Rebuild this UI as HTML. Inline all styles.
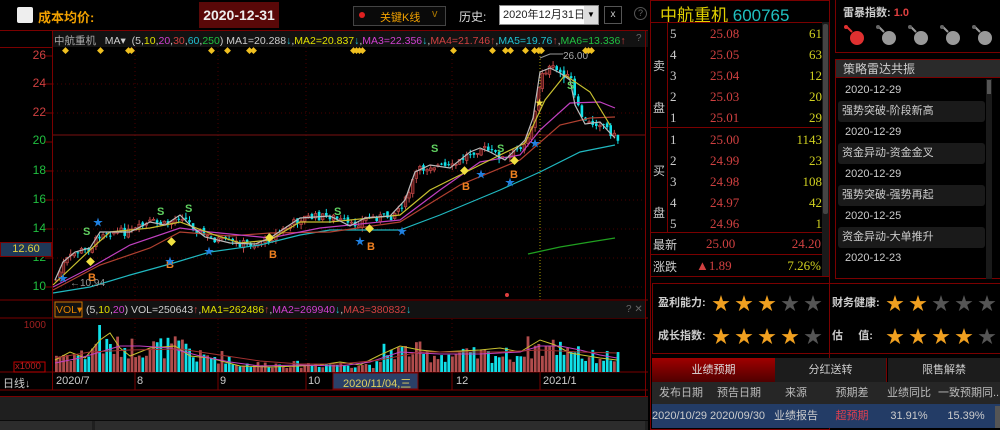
<!DOCTYPE html>
<html><head><meta charset="utf-8">
<style>
*{margin:0;padding:0;box-sizing:border-box}
body{width:1000px;height:430px;background:#000;overflow:hidden;position:relative;font-family:"Liberation Sans","Noto Sans CJK SC",sans-serif;font-size:12px;color:#ccc}
.a{position:absolute;white-space:nowrap}
.rb{border:1px solid #7a0000}
</style></head><body>
<!-- top bar -->
<div class="a" style="left:17px;top:7px;width:16px;height:16px;background:#eee;border-radius:2px"></div>
<div class="a" style="left:38px;top:7px;color:#f0a000;font-size:13px;font-weight:bold">成本均价:</div>
<div class="a" style="left:199px;top:2px;width:80px;height:26px;background:#5a0808;color:#eee;font-weight:bold;font-size:14px;line-height:26px;text-align:center">2020-12-31</div>
<div class="a" style="left:353px;top:6px;width:93px;height:20px;border:1px solid #444;background:#0a0a0a"></div>
<div class="a" style="left:359px;top:12px;width:6px;height:6px;border-radius:50%;background:#e02020"></div>
<div class="a" style="left:380px;top:9px;color:#f0a000;font-size:11px">关键K线</div>
<div class="a" style="left:432px;top:8px;color:#aa7700;font-size:11px">v</div>
<div class="a" style="left:459px;top:8px;color:#ddd;font-size:12px">历史:</div>
<div class="a" style="left:499px;top:5px;width:100px;height:20px;background:#fff;border:1px solid #888;color:#222;font-size:11px;line-height:18px;padding-left:3px">2020年12月31日</div>
<div class="a" style="left:584px;top:6px;width:14px;height:18px;background:#ddd;color:#000;font-size:8px;text-align:center;line-height:18px">▼</div>
<div class="a" style="left:604px;top:6px;width:18px;height:18px;border:1px solid #555;color:#ccc;font-size:10px;text-align:center;line-height:16px">x</div>
<div class="a" style="left:634px;top:7px;width:13px;height:13px;border:1px solid #555;border-radius:50%;color:#666;font-size:9px;text-align:center;line-height:11px">?</div>

<!-- chart frame -->
<div class="a" style="left:0;top:30px;width:648px;height:1px;background:#7a0000"></div>
<div class="a" style="left:52px;top:30px;width:1px;height:360px;background:#7a0000"></div>
<div class="a" style="left:0;top:47px;width:52px;height:1px;background:#7a0000"></div>
<div class="a" style="left:53px;top:31px;width:595px;height:16px;background:#121212"></div>
<div class="a" style="left:54px;top:33px;font-size:10.5px;color:#ccc"><span style="color:#aaa">中航重机</span>&nbsp;&nbsp;&nbsp;MA▾&nbsp;&nbsp;(5,<span style="color:#e0e000">10</span>,<span style="color:#d040d0">20</span>,<span style="color:#d04040">30</span>,<span style="color:#20c0d0">60</span>,<span style="color:#20c040">250</span>) MA1=20.288<span style="color:#20c0d0">↓</span>,<span style="color:#e0e000">MA2=20.837</span><span style="color:#20c0d0">↓</span>,<span style="color:#d040d0">MA3=22.356</span><span style="color:#20c0d0">↓</span>,<span style="color:#d04040">MA4=21.746↑</span>,<span style="color:#20c0d0">MA5=19.76</span><span style="color:#d04040">↑</span>,<span style="color:#20c040">MA6=13.336</span><span style="color:#d04040">↑</span></div>
<div class="a" style="left:636px;top:33px;font-size:10px;color:#666">?</div>
<div class="a" style="left:645px;top:30px;width:1px;height:400px;background:#7a0000"></div>

<!-- price labels -->
<div class="a" style="left:0;top:48px;width:46px;text-align:right;font-size:12px;color:#d04040">26</div>
<div class="a" style="left:0;top:76px;width:46px;text-align:right;font-size:12px;color:#d04040">24</div>
<div class="a" style="left:0;top:105px;width:46px;text-align:right;font-size:12px;color:#d04040">22</div>
<div class="a" style="left:0;top:133px;width:46px;text-align:right;font-size:12px;color:#20c040">20</div>
<div class="a" style="left:0;top:163px;width:46px;text-align:right;font-size:12px;color:#20c040">18</div>
<div class="a" style="left:0;top:192px;width:46px;text-align:right;font-size:12px;color:#20c040">16</div>
<div class="a" style="left:0;top:221px;width:46px;text-align:right;font-size:12px;color:#20c040">14</div>
<div class="a" style="left:0;top:250px;width:46px;text-align:right;font-size:12px;color:#20c040">12</div>
<div class="a" style="left:0;top:279px;width:46px;text-align:right;font-size:12px;color:#20c040">10</div>
<div class="a" style="left:0;top:242px;width:52px;height:15px;background:#1f3858;border:1px solid #7a0000;color:#e0d040;font-size:11px;text-align:center;line-height:13px">12.60</div>

<svg class="a" style="left:0;top:0" width="648" height="392" id="chart">
<g stroke="#4a0000" stroke-dasharray="1,3">
<line x1="53" y1="84" x2="645" y2="84"/><line x1="53" y1="113" x2="645" y2="113"/><line x1="53" y1="171" x2="645" y2="171"/><line x1="53" y1="200" x2="645" y2="200"/><line x1="53" y1="229" x2="645" y2="229"/><line x1="53" y1="258" x2="645" y2="258"/><line x1="53" y1="287" x2="645" y2="287"/>
<line x1="135" y1="47" x2="135" y2="372"/><line x1="218" y1="47" x2="218" y2="372"/><line x1="306" y1="47" x2="306" y2="372"/><line x1="452" y1="47" x2="452" y2="372"/>
</g>
<g stroke="#7a0000"><line x1="45" y1="56" x2="52" y2="56"/><line x1="45" y1="84" x2="52" y2="84"/><line x1="45" y1="113" x2="52" y2="113"/><line x1="45" y1="142" x2="52" y2="142"/><line x1="45" y1="171" x2="52" y2="171"/><line x1="45" y1="200" x2="52" y2="200"/><line x1="45" y1="229" x2="52" y2="229"/><line x1="45" y1="258" x2="52" y2="258"/><line x1="45" y1="287" x2="52" y2="287"/></g>
<line x1="53" y1="135" x2="645" y2="135" stroke="#7a1010"/>
<line x1="540" y1="47" x2="540" y2="300" stroke="#b0a000" stroke-dasharray="1,2"/>
<line x1="0" y1="300" x2="648" y2="300" stroke="#7a0000"/>
<line x1="0" y1="318" x2="648" y2="318" stroke="#7a0000"/>
<line x1="0" y1="372" x2="648" y2="372" stroke="#7a0000"/>
<line x1="0" y1="390" x2="648" y2="390" stroke="#7a0000"/>
<rect x="53" y="301" width="592" height="17" fill="#121212"/>
<g id="candles"></g>
<g fill="none" stroke-width="1.2">
<polyline stroke="#20b8c0" points="53,293 90,287 130,275 170,264 210,252 260,245 300,235 330,230 400,230 440,215 500,190 540,172 580,152 615,145"/>
<polyline stroke="#b04030" points="53,290 100,265 150,248 180,232 230,236 270,233 330,232 400,222 460,185 520,160 560,125 590,118 615,117"/>
<polyline stroke="#c040c0" points="53,287 90,268 130,245 180,228 210,232 270,238 320,228 400,220 440,190 480,162 520,155 540,130 570,103 600,102 615,108"/>
<polyline stroke="#c8c030" points="53,285 90,250 110,232 150,228 180,222 215,235 240,243 270,240 300,222 330,222 400,215 430,190 460,175 500,155 525,143 545,100 565,75 590,92 610,125"/>
<polyline stroke="#bbb" points="55,280 63,262 75,252 90,248 100,232 110,232 130,232 150,222 165,225 180,215 190,225 205,237 230,243 255,244 270,238 300,218 330,216 350,226 365,218 390,216 405,200 415,172 430,165 450,168 470,152 480,148 490,152 505,160 515,150 525,140 533,118 540,72 550,68 560,73 570,80 575,105 585,124 600,122 610,133 615,138"/>
<polyline stroke="#20a020" points="528,254 560,247 590,242 615,238"/>
</g>
<g font-weight="bold" font-size="11" font-family="Liberation Sans">
<g fill="#60d060"><text x="83" y="235">S</text><text x="157" y="215">S</text><text x="185" y="212">S</text><text x="334" y="215">S</text><text x="431" y="152">S</text><text x="497" y="152">S</text><text x="567" y="89">S</text></g>
<g fill="#f08020"><text x="166" y="268">B</text><text x="269" y="258">B</text><text x="367" y="250">B</text><text x="462" y="190">B</text><text x="510" y="178">B</text><text x="88" y="281">B</text></g>
</g>
<g fill="#2080e0" font-size="10"><text x="58" y="282">★</text><text x="93" y="226">★</text><text x="165" y="265">★</text><text x="204" y="255">★</text><text x="355" y="245">★</text><text x="397" y="235">★</text><text x="476" y="178">★</text><text x="505" y="186">★</text><text x="530" y="147">★</text></g>
<g fill="#f0e040" font-size="9"><text x="86" y="265">◆</text><text x="167" y="245">◆</text><text x="265" y="241">◆</text><text x="365" y="232">◆</text><text x="460" y="174">◆</text><text x="510" y="164">◆</text><text x="535" y="106">★</text></g>
<text x="70" y="286" fill="#999" font-size="10">←10.94</text>
<text x="563" y="59" fill="#aaa" font-size="10">26.00</text>
<polyline points="540,58 550,54 563,54" fill="none" stroke="#999"/>
<circle cx="507" cy="295" r="2" fill="#e04040"/>
<g fill="#f0c020" font-size="7" id="dia"></g>
<g id="vol"></g>
<g fill="none" stroke-width="1">
<polyline stroke="#c8c030" points="55,360 70,352 85,358 100,340 110,333 120,348 130,356 150,348 175,346 190,356 210,358 240,366 270,367 300,366 320,365 340,362 360,365 380,355 400,346 420,350 440,352 480,350 500,348 520,352 540,340 555,345 570,353 600,358 617,360"/>
<polyline stroke="#c040c0" points="55,363 80,358 100,352 120,346 140,346 170,348 200,356 230,362 260,366 300,365 340,366 370,362 400,352 440,354 480,354 520,352 540,346 560,346 580,350 600,355 617,358"/>
<polyline stroke="#a03030" points="55,358 90,352 130,350 180,349 220,355 260,361 300,364 340,364 380,360 420,352 460,352 500,352 540,350 580,352 617,353"/>
</g>
<rect x="55" y="302" width="27" height="15" fill="none" stroke="#d07000"/>
<rect x="14" y="362" width="31" height="10" fill="none" stroke="#c00000"/>
<rect x="333" y="373" width="85" height="16" fill="#2a4068" stroke="#7a0000"/>
<g stroke="#7a0000"><line x1="135" y1="372" x2="135" y2="390"/><line x1="218" y1="372" x2="218" y2="390"/><line x1="306" y1="372" x2="306" y2="390"/><line x1="452" y1="372" x2="452" y2="390"/><line x1="540" y1="372" x2="540" y2="390"/></g>
</svg>
<div class="a" style="left:56px;top:304px;font-size:10.5px;color:#e08000">VOL▾</div>
<div class="a" style="left:86px;top:304px;font-size:10.5px;color:#ccc">(5,<span style="color:#e0e000">10</span>,<span style="color:#d040d0">20</span>) VOL=250643<span style="color:#d04040">↑</span>,<span style="color:#e0e000">MA1=262486</span><span style="color:#d04040">↑</span>,<span style="color:#d040d0">MA2=269940</span><span style="color:#20c0d0">↓</span>,<span style="color:#d04040">MA3=380832</span><span style="color:#20c0d0">↓</span></div>
<div class="a" style="left:626px;top:304px;font-size:10px;color:#666">? ✕</div>
<div class="a" style="left:0;top:320px;width:46px;text-align:right;font-size:10px;color:#a02020">1000</div>
<div class="a" style="left:15px;top:361px;font-size:9.5px;color:#c02020">x1000</div>
<div class="a" style="left:3px;top:375px;font-size:11px;color:#ccc">日线↓</div>
<div class="a" style="left:56px;top:375px;font-size:11px;color:#ccc">2020/7</div>
<div class="a" style="left:137px;top:375px;font-size:11px;color:#ccc">8</div>
<div class="a" style="left:220px;top:375px;font-size:11px;color:#ccc">9</div>
<div class="a" style="left:308px;top:375px;font-size:11px;color:#ccc">10</div>
<div class="a" style="left:343px;top:375px;font-size:11px;color:#e0d060">2020/11/04,三</div>
<div class="a" style="left:456px;top:375px;font-size:11px;color:#ccc">12</div>
<div class="a" style="left:543px;top:375px;font-size:11px;color:#ccc">2021/1</div>
<!-- bottom left -->
<div class="a" style="left:0;top:396px;width:648px;height:34px;background:#1f1f1f;border-top:1px solid #7a0000"></div>
<div class="a" style="left:0;top:420px;width:648px;height:1px;background:#0a0a0a"></div>
<div class="a" style="left:0;top:421px;width:92px;height:9px;background:#2c2c2c"></div>
<div class="a" style="left:95px;top:421px;width:550px;height:9px;background:#2c2c2c"></div>

<!-- order book -->
<div class="a rb" style="left:650px;top:0;width:180px;height:430px"></div>
<div class="a" style="left:660px;top:1px;font-size:17px;color:#e0d000">中航重机 <span style="color:#20c0c0">600765</span></div>
<div class="a" style="left:650px;top:22px;width:180px;height:1px;background:#7a0000"></div>
<div class="a" style="left:650px;top:127px;width:172px;height:1px;background:#7a0000"></div>
<div class="a" style="left:650px;top:232px;width:172px;height:1px;background:#7a0000"></div>
<div class="a" style="left:650px;top:254px;width:172px;height:1px;background:#7a0000"></div>
<div class="a" style="left:650px;top:276px;width:180px;height:1px;background:#7a0000"></div>
<div class="a" style="left:667px;top:22px;width:1px;height:210px;background:#7a0000"></div>
<div class="a" style="left:822px;top:22px;width:7px;height:254px;background:#1a1a1a"></div>
<div class="a" style="left:823px;top:24px;width:5px;height:190px;background:#444;border-radius:2px"></div>
<div class="a" style="left:653px;top:45px;font-size:12px;color:#ccc;line-height:42px">卖<br>盘</div>
<div class="a" style="left:653px;top:150px;font-size:12px;color:#ccc;line-height:42px">买<br>盘</div>
<div class="a" style="left:670px;top:23px;width:152px;font-size:13px;line-height:21px;font-family:'Liberation Serif',serif">
<div style="display:flex"><span style="width:40px;color:#ccc">5</span><span style="width:60px;color:#d04040">25.08</span><span style="flex:1;text-align:right;color:#d0d020">61</span></div>
<div style="display:flex"><span style="width:40px;color:#ccc">4</span><span style="width:60px;color:#d04040">25.05</span><span style="flex:1;text-align:right;color:#d0d020">63</span></div>
<div style="display:flex"><span style="width:40px;color:#ccc">3</span><span style="width:60px;color:#d04040">25.04</span><span style="flex:1;text-align:right;color:#d0d020">12</span></div>
<div style="display:flex"><span style="width:40px;color:#ccc">2</span><span style="width:60px;color:#d04040">25.03</span><span style="flex:1;text-align:right;color:#d0d020">20</span></div>
<div style="display:flex"><span style="width:40px;color:#ccc">1</span><span style="width:60px;color:#d04040">25.01</span><span style="flex:1;text-align:right;color:#d0d020">29</span></div>
<div style="display:flex;margin-top:1px"><span style="width:40px;color:#ccc">1</span><span style="width:60px;color:#d04040">25.00</span><span style="flex:1;text-align:right;color:#d0d020">1143</span></div>
<div style="display:flex"><span style="width:40px;color:#ccc">2</span><span style="width:60px;color:#d04040">24.99</span><span style="flex:1;text-align:right;color:#d0d020">23</span></div>
<div style="display:flex"><span style="width:40px;color:#ccc">3</span><span style="width:60px;color:#d04040">24.98</span><span style="flex:1;text-align:right;color:#d0d020">108</span></div>
<div style="display:flex"><span style="width:40px;color:#ccc">4</span><span style="width:60px;color:#d04040">24.97</span><span style="flex:1;text-align:right;color:#d0d020">42</span></div>
<div style="display:flex"><span style="width:40px;color:#ccc">5</span><span style="width:60px;color:#d04040">24.96</span><span style="flex:1;text-align:right;color:#d0d020">1</span></div>
</div>
<div class="a" style="left:653px;top:236px;width:168px;display:flex;font-size:12px"><span style="width:30px;color:#ccc">最新</span><span style="width:70px;padding-left:23px;color:#d04040;font-family:'Liberation Serif',serif;font-size:13px">25.00</span><span style="flex:1;text-align:right;color:#d04040;font-family:'Liberation Serif',serif;font-size:13px">24.20</span></div>
<div class="a" style="left:653px;top:258px;width:168px;display:flex;font-size:12px"><span style="width:30px;color:#ccc">涨跌</span><span style="width:70px;padding-left:13px;color:#d04040;font-family:'Liberation Serif',serif;font-size:13px">▲1.89</span><span style="flex:1;text-align:right;color:#d0d020;font-family:'Liberation Serif',serif;font-size:13px">7.26%</span></div>

<!-- right column -->
<div class="a rb" style="left:835px;top:-1px;width:166px;height:54px"></div>
<div class="a" style="left:843px;top:4px;font-size:11px;color:#ccc;font-weight:bold">雷暴指数: <span style="color:#e04040">1.0</span></div>
<svg class="a" style="left:843px;top:24px" width="157" height="24">
<g><circle cx="14" cy="14" r="7" fill="#e03030"/><path d="M9,8 L4,3" stroke="#e03030" stroke-width="2"/><circle cx="3" cy="3" r="2" fill="#e03030"/></g>
<g fill="#999" stroke="#999"><circle cx="46" cy="14" r="7" stroke="none"/><path d="M41,8 L36,3" stroke-width="2"/><circle cx="35" cy="3" r="2" stroke="none" fill="#666"/>
<circle cx="78" cy="14" r="7" stroke="none"/><path d="M73,8 L68,3" stroke-width="2"/><circle cx="67" cy="3" r="2" stroke="none" fill="#666"/>
<circle cx="110" cy="14" r="7" stroke="none"/><path d="M105,8 L100,3" stroke-width="2"/><circle cx="99" cy="3" r="2" stroke="none" fill="#666"/>
<circle cx="142" cy="14" r="7" stroke="none"/><path d="M137,8 L132,3" stroke-width="2"/><circle cx="131" cy="3" r="2" stroke="none" fill="#666"/></g>
</svg>
<div class="a rb" style="left:835px;top:59px;width:166px;height:220px"></div>
<div class="a" style="left:836px;top:60px;width:164px;height:18px;background:#2a2a2a;border-bottom:1px solid #7a0000;font-size:12px;color:#ccc;padding-left:7px;line-height:18px">策略雷达共振</div>
<div class="a" style="left:986px;top:79px;width:6px;height:200px;background:#1a1a1a"></div>
<div class="a" style="left:987px;top:80px;width:4px;height:14px;background:#555"></div>
<div class="a" style="left:838px;top:80px;width:147px;font-size:11px;color:#ccc;line-height:21px">
<div style="padding-left:7px">2020-12-29</div>
<div style="background:#1a1a1a;border-radius:3px;padding-left:4px">强势突破-阶段新高</div>
<div style="padding-left:7px">2020-12-29</div>
<div style="background:#1a1a1a;border-radius:3px;padding-left:4px">资金异动-资金金叉</div>
<div style="padding-left:7px">2020-12-29</div>
<div style="background:#1a1a1a;border-radius:3px;padding-left:4px">强势突破-强势再起</div>
<div style="padding-left:7px">2020-12-25</div>
<div style="background:#1a1a1a;border-radius:3px;padding-left:4px">资金异动-大单推升</div>
<div style="padding-left:7px">2020-12-23</div>
</div>

<!-- stars -->
<div class="a rb" style="left:652px;top:283px;width:349px;height:71px"></div>
<div class="a" style="left:658px;top:294px;font-size:11px;color:#ccc;font-weight:bold">盈利能力:</div>
<div class="a" style="left:658px;top:327px;font-size:11px;color:#ccc;font-weight:bold">成长指数:</div>
<div class="a" style="left:832px;top:294px;font-size:11px;color:#ccc;font-weight:bold">财务健康:</div>
<div class="a" style="left:832px;top:327px;font-size:11px;color:#ccc;font-weight:bold">估&nbsp;&nbsp;&nbsp;&nbsp;&nbsp;值:</div>
<div class="a" style="left:712px;top:290px;font-size:18px;letter-spacing:5px;color:#f0a020">★★★<span style="color:#555">★★</span></div>
<div class="a" style="left:712px;top:323px;font-size:18px;letter-spacing:5px;color:#f0a020">★★★★<span style="color:#555">★</span></div>
<div class="a" style="left:886px;top:290px;font-size:18px;letter-spacing:5px;color:#f0a020">★★<span style="color:#555">★★★</span></div>
<div class="a" style="left:886px;top:323px;font-size:18px;letter-spacing:5px;color:#f0a020">★★★★<span style="color:#555">★</span></div>

<!-- tabs -->
<div class="a" style="left:652px;top:358px;width:123px;height:24px;background:linear-gradient(#a00000,#500000);color:#ddd;font-size:11px;text-align:center;line-height:24px">业绩预期</div>
<div class="a" style="left:775px;top:358px;width:112px;height:24px;background:#1c1c1c;border-right:1px solid #7a0000;color:#ccc;font-size:11px;text-align:center;line-height:24px">分红送转</div>
<div class="a" style="left:888px;top:358px;width:112px;height:24px;background:#1c1c1c;color:#ccc;font-size:11px;text-align:center;line-height:24px">限售解禁</div>
<div class="a" style="left:652px;top:382px;width:348px;height:22px;background:#262626;display:flex;font-size:11px;color:#bbb;line-height:22px">
<span style="width:58px;text-align:center">发布日期</span><span style="width:58px;text-align:center">预告日期</span><span style="width:56px;text-align:center">来源</span><span style="width:56px;text-align:center">预期差</span><span style="width:58px;text-align:center">业绩同比</span><span style="width:62px;text-align:center">一致预期同...</span></div>
<div class="a" style="left:652px;top:404px;width:348px;height:24px;background:#233c66;display:flex;font-size:11px;color:#ccc;line-height:24px">
<span style="width:58px">2020/10/29</span><span style="width:58px">2020/09/30</span><span style="width:56px;text-align:center">业绩报告</span><span style="width:56px;text-align:center;color:#e04050">超预期</span><span style="width:58px;text-align:center">31.91%</span><span style="width:56px;text-align:center">15.39%</span></div>
<div class="a" style="left:995px;top:406px;width:5px;height:22px;background:#555"></div>

<script>
(function(){
var ns="http://www.w3.org/2000/svg";
var P=[[55,280],[63,262],[75,252],[90,248],[100,232],[110,232],[130,232],[150,222],[165,225],[180,215],[190,225],[205,237],[230,243],[255,244],[270,238],[300,218],[330,216],[350,226],[365,218],[390,216],[405,200],[415,172],[430,165],[450,168],[470,152],[480,148],[490,152],[505,160],[515,150],[525,140],[533,118],[540,72],[550,68],[560,73],[570,80],[575,105],[585,124],[600,122],[610,133],[617,140]];
function iy(x){for(var i=0;i<P.length-1;i++){if(x>=P[i][0]&&x<=P[i+1][0]){var t=(x-P[i][0])/(P[i+1][0]-P[i][0]);return P[i][1]+t*(P[i+1][1]-P[i][1]);}}return P[P.length-1][1];}
var s=7;function r(){s=(s*9301+49297)%233280;return s/233280;}
var g=document.getElementById("candles"),v=document.getElementById("vol");
function el(n,a,p){var e=document.createElementNS(ns,n);for(var k in a)e.setAttribute(k,a[k]);p.appendChild(e);return e;}
var prev=iy(55);
for(var x=55;x<=617;x+=3.6){
 var c=iy(x)+(r()-0.5)*8,o=prev+(r()-0.5)*4,up=c<o;
 var hi=Math.min(o,c)-r()*5,lo=Math.max(o,c)+r()*5;
 var col=up?"#c04848":"#10e0e8";
 el("line",{x1:x+1.3,y1:hi,x2:x+1.3,y2:lo,stroke:col},g);
 el("rect",{x:x,y:Math.min(o,c),width:2.6,height:Math.max(1,Math.abs(o-c)),fill:up?"#5a1818":col,stroke:up?col:"none","stroke-width":0.7},g);
 prev=c;
 var base;
 if(x<90)base=18;else if(x<190)base=26;else if(x<230)base=16;else if(x<380)base=8;else if(x<420)base=22;else if(x<520)base=18;else if(x<580)base=26;else base=16;
 var h=base*(0.5+r()*0.9);if(Math.abs(x-98)<2)h=47;
 el("rect",{x:x,y:372-h,width:2.8,height:h,fill:up?"#b04c4c":"#10e0e8"},v);
}
var d=document.getElementById("dia");
[62,97,125,128,208,224,246,250,350,353,356,359,450,489,502,507,522,531,535,538,582,585,588].forEach(function(x){var t=el("text",{x:x,y:53},d);t.textContent="◆";});
})();
</script>
</body></html>
